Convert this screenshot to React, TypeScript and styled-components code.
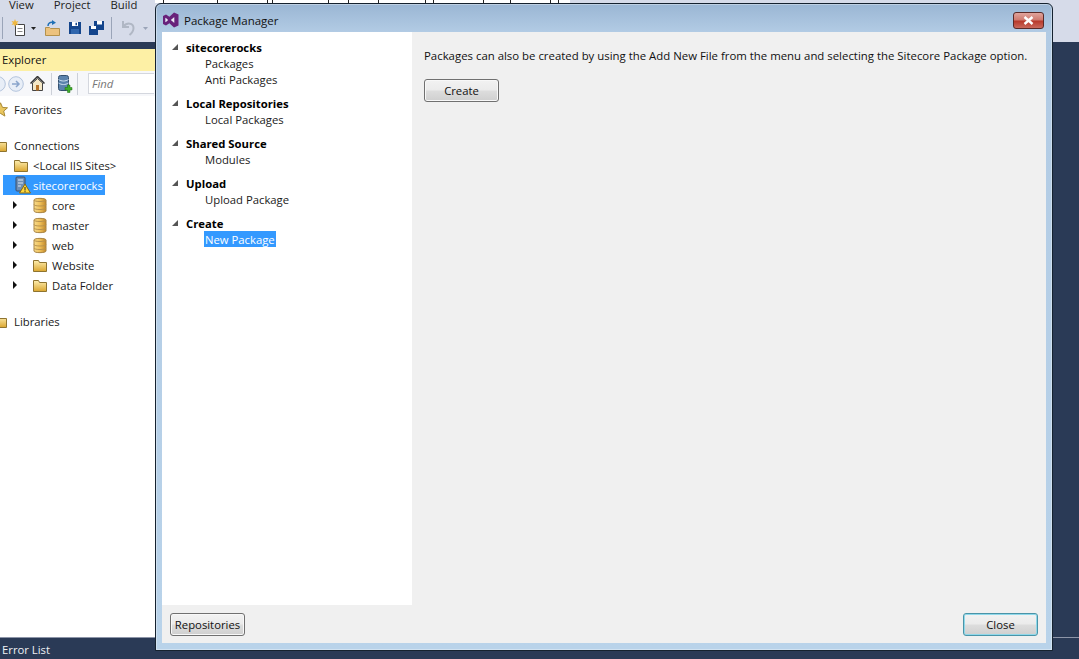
import React from 'react';
import styled, { createGlobalStyle } from 'styled-components';

const GlobalStyle = createGlobalStyle`
  html, body {
    margin: 0;
    padding: 0;
    height: 100%;
    overflow: hidden;
    background: #2a3a56;
  }
  body {
    font-family: "Open Sans", "Noto Sans", sans-serif;
    font-size: 11.3px;
    color: #1a1a1a;
  }
`;

const Shell = styled.div`
  position: relative;
  width: 1079px;
  height: 659px;
  overflow: hidden;
  display: flex;
  flex-direction: column;
`;

const MenuBar = styled.div`
  height: 12px;
  flex: none;
  display: flex;
  background: #d6dbe9;
  overflow: hidden;
  padding-left: 9px;
  gap: 20px;
`;

const MenuItem = styled.span`
  line-height: 9px;
  height: 12px;
  color: #222;
`;

const MainToolbar = styled.div`
  height: 30px;
  flex: none;
  display: flex;
  align-items: center;
  padding: 2px 0 0 2px;
  box-sizing: border-box;
  background: #d6dbe9;
`;

const Tool = styled.span<{ $ml: number }>`
  display: flex;
  flex: none;
  margin-left: ${p => p.$ml}px;
`;

const Separator = styled.div<{ $light?: boolean }>`
  width: 1px;
  height: 22px;
  background: ${p => (p.$light ? '#ccd0d8' : '#9aa4b8')};
`;

const Middle = styled.div`
  flex: 1;
  display: flex;
  padding-top: 7px;
  min-height: 0;
`;

const ExplorerPane = styled.div`
  width: 155px;
  background: #fff;
  display: flex;
  flex-direction: column;
  overflow: hidden;
`;

const PaneTitle = styled.div`
  height: 22px;
  background: #fdf0a5;
  line-height: 22px;
  padding-left: 2px;
  flex: none;
  color: #111;
`;

const PaneToolbar = styled.div`
  height: 25px;
  flex: none;
  display: flex;
  align-items: center;
  background: #f6f7fa;
  box-sizing: border-box;
`;

const FindBox = styled.div`
  width: 66px;
  height: 21px;
  box-sizing: border-box;
  background: #fff;
  border: 1px solid #d4d7de;
  border-right: none;
  font-style: italic;
  color: #777;
  line-height: 19px;
  padding-left: 3px;
`;

const Tree = styled.div`
  display: flex;
  flex-direction: column;
  padding-top: 3px;
`;

const Row = styled.div<{ $indent: number; $gapBefore?: number }>`
  height: 20px;
  display: flex;
  align-items: center;
  padding-left: ${p => p.$indent}px;
  margin-top: ${p => p.$gapBefore ?? 0}px;
`;

const IconSlot = styled.span<{ $width: number }>`
  width: ${p => p.$width}px;
  flex: none;
  display: flex;
  align-items: center;
`;

// left-edge icons are cut by the window edge in the screenshot
const CutIcon = styled.span`
  display: flex;
  margin-left: -7px;
`;

const SelectedRow = styled.div`
  height: 20px;
  display: flex;
  align-items: center;
  padding: 0 2px 0 12px;
  background: #3399ff;
  color: #fff;
`;

const Expander = styled.span`
  width: 0;
  height: 0;
  margin-right: 16px;
  flex: none;
  border-left: 4px solid #111;
  border-top: 4px solid transparent;
  border-bottom: 4px solid transparent;
`;

const BottomBar = styled.div`
  height: 22px;
  box-sizing: border-box;
  flex: none;
  background: #2a3a56;
  border-top: 1px solid #8d95a8;
  color: #eef0f4;
  line-height: 23px;
  padding-left: 2px;
`;

const TopClip = styled.div`
  position: absolute;
  left: 155px;
  top: 0;
  width: 415px;
  height: 3px;
  background: #fff;
  display: flex;
`;

const Dialog = styled.div`
  position: absolute;
  left: 155px;
  top: 3px;
  width: 898px;
  height: 648px;
  box-sizing: border-box;
  border: 1px solid #15222f;
  border-radius: 6px 6px 0 0;
  background: linear-gradient(180deg, #9ab6d4 0, #b2cbe4 28px, #b9d3ea 100%);
  display: flex;
  flex-direction: column;
  padding: 0 6px 7px;
  box-shadow: inset 0 0 0 1px rgba(255, 255, 255, 0.35);
`;

const TitleBar = styled.div`
  height: 28px;
  box-sizing: border-box;
  flex: none;
  display: flex;
  align-items: center;
  gap: 5px;
  padding: 4px 2px 0 0;
`;

const TitleText = styled.span`
  flex: 1;
  font-size: 11.5px;
  color: #111;
`;

const CloseButton = styled.div`
  width: 31px;
  height: 17px;
  box-sizing: border-box;
  border: 1px solid #5a2a28;
  border-radius: 3px;
  background: linear-gradient(180deg, #e0a49c 0, #cf7b70 45%, #b83a2c 55%, #c9695c 100%);
  display: flex;
  align-items: center;
  justify-content: center;
`;

const DialogBody = styled.div`
  flex: 1;
  display: flex;
  flex-direction: column;
  background: #f0f0f0;
  min-height: 0;
`;

const DialogMain = styled.div`
  flex: 1;
  display: flex;
  min-height: 0;
`;

const NavPanel = styled.div`
  width: 250px;
  background: #fff;
  padding: 7px 0 0 10px;
  box-sizing: border-box;
  display: flex;
  flex-direction: column;
  gap: 8px;
`;

const NavGroup = styled.div`
  display: flex;
  flex-direction: column;
`;

const NavHeading = styled.div`
  height: 16px;
  line-height: 17px;
  font-weight: 700;
  color: #000;
  display: flex;
  align-items: center;
  gap: 8px;
`;

const NavArrow = styled.span`
  width: 0;
  height: 0;
  border-bottom: 6px solid #555;
  border-left: 6px solid transparent;
`;

const NavItem = styled.div`
  height: 16px;
  line-height: 17px;
  padding-left: 32px;
`;

const NavLabel = styled.span<{ $selected?: boolean }>`
  display: inline-block;
  padding: 0 1px;
  height: 16px;
  background: ${p => (p.$selected ? '#3399ff' : 'transparent')};
  color: ${p => (p.$selected ? '#fff' : 'inherit')};
`;

const ContentPanel = styled.div`
  flex: 1;
  padding: 16px 12px;
`;

const Message = styled.div`
  font-size: 11.4px;
  line-height: 16px;
  color: #111;
  margin-bottom: 15px;
  white-space: nowrap;
`;

const Button = styled.div<{ $focused?: boolean }>`
  width: 75px;
  height: 23px;
  box-sizing: border-box;
  border: 1px solid ${p => (p.$focused ? '#4a94a8' : '#707070')};
  border-radius: 3px;
  background: linear-gradient(180deg, #f2f2f2 0, #ebebeb 48%, #dddddd 52%, #cfcfcf 100%);
  box-shadow: inset 0 0 0 1px ${p => (p.$focused ? '#8fd8ea' : '#f8f8f8')};
  display: flex;
  align-items: center;
  justify-content: center;
  color: #111;
`;

const Footer = styled.div`
  height: 38px;
  flex: none;
  display: flex;
  align-items: center;
  justify-content: space-between;
  box-sizing: border-box;
  padding: 0 8px;
`;

const Folder = ({ width = 14, height = 13 }: { width?: number; height?: number }) => (
  <svg width={width} height={height} viewBox="0 0 14 13">
    <defs>
      <linearGradient id="fold" x1="0" y1="0" x2="0" y2="1">
        <stop offset="0" stopColor="#fdeeb0" />
        <stop offset="1" stopColor="#dba62f" />
      </linearGradient>
    </defs>
    <path d="M.5 1.500h5l1 2h7v9H.5z" fill="url(#fold)" stroke="#8f7430" />
  </svg>
);

const Database = () => (
  <svg width="14" height="17" viewBox="0 0 14 17">
    <defs>
      <linearGradient id="db" x1="0" y1="0" x2="1" y2="0">
        <stop offset="0" stopColor="#f7dc8e" />
        <stop offset="0.5" stopColor="#efc05a" />
        <stop offset="1" stopColor="#c2892a" />
      </linearGradient>
    </defs>
    <path d="M1 3C1 .8 13 .8 13 3v11c0 2.200-12 2.200-12 0z" fill="url(#db)" stroke="#a98443" />
    <path d="M1 3c0 2 12 2 12 0M1 7.500c0 2 12 2 12 0M1 11c0 2 12 2 12 0" fill="none" stroke="#b8934e" />
  </svg>
);

const ServerWarning = () => (
  <svg width="16" height="18" viewBox="0 0 16 18">
    <rect x="1" y="1" width="9" height="14" rx="1" fill="#6f8fb5" stroke="#3b4e6b" />
    <path d="M3 4h5M3 7h5M3 10h3" stroke="#dfe8f2" />
    <path d="M10 8l5.500 9H4.500z" fill="#ffd83a" stroke="#8a6a10" />
    <path d="M10 11v3.500M10 15.200v1" stroke="#222" />
  </svg>
);

const VsLogo = () => (
  <svg width="17" height="16" viewBox="0 0 17 16">
    <path
      d="M12 .5l4.500 2v11l-4.500 2-4.600-4.300L4 13.500l-3-1.500V4l3-1.500 3.400 2.300zM3.500 5.700v4.600L6 8zM9 8l3.200 2.800V5.200z"
      fill="#68217a"
      fillRule="evenodd"
    />
    <path d="M3.500 5.700v4.600L6 8zM9 8l3.200 2.800V5.200z" fill="#efe6f2" />
  </svg>
);

const NewItem = () => (
  <svg width="16" height="18" viewBox="0 0 16 18">
    <path d="M4.500 5.500h9v11h-9z" fill="#fff" stroke="#444" />
    <path d="M6.500 9.500h5M6.500 12.500h5" stroke="#888" />
    <path d="M4 0l1 2.500L7.500 2 6 4l1.500 2L5 5.500 4 8 3 5.500.5 6 2 4 .5 2 3 2.500z" fill="#f0b840" />
  </svg>
);

const OpenFolder = () => (
  <svg width="15" height="16" viewBox="0 0 15 16">
    <path d="M.5 7.500h4l1 1h9v7H.5z" fill="#ecc27e" stroke="#b3914c" />
    <path d="M3 6c0-3 2.500-4 5-3.500" fill="none" stroke="#1f6fb5" strokeWidth="1.500" />
    <path d="M7 0l4 2.700L7 5z" fill="#1f6fb5" />
  </svg>
);

const Floppy = () => (
  <svg width="12" height="12" viewBox="0 0 12 12">
    <path d="M0 0h12v12H0z" fill="#14458c" />
    <path d="M3 0h6v4H3z" fill="#fff" />
    <path d="M6.500 .8h1.500v2.400H6.500z" fill="#14458c" />
    <path d="M2 7h8v5H2z" fill="#2f66ad" />
  </svg>
);

const FloppyStack = () => (
  <svg width="15" height="14" viewBox="0 0 15 14">
    <path d="M5 0h10v9H5z" fill="#14458c" />
    <path d="M8 0h5v3.500H8z" fill="#fff" />
    <path d="M0 5h9v9H0z" fill="#14458c" />
    <path d="M2 5h5v3H2z" fill="#fff" />
  </svg>
);

const Undo = () => (
  <svg width="14" height="16" viewBox="0 0 14 16">
    <path d="M2 1v6h6" fill="none" stroke="#b0b7c4" strokeWidth="2" />
    <path d="M2.500 6.500C6 2 12.500 3 12.500 8c0 2.500-1.500 5-4 7" fill="none" stroke="#b0b7c4" strokeWidth="2" />
  </svg>
);

const Caret = ({ color = '#222' }: { color?: string }) => (
  <svg width="5" height="3" viewBox="0 0 5 3">
    <path d="M0 0h5L2.500 3z" fill={color} />
  </svg>
);

const NavCircle = ({ faded }: { faded?: boolean }) => (
  <svg width="16" height="16" viewBox="0 0 16 16">
    <circle cx="8" cy="8" r="7.300" fill="#e8eef7" stroke="#b3c4dc" />
    {!faded && <path d="M4 8h6M8 5l3 3-3 3" fill="none" stroke="#8aa5cc" strokeWidth="1.500" />}
  </svg>
);

const Home = () => (
  <svg width="15" height="15" viewBox="0 0 15 15">
    <path d="M.5 7.500l7-7 7 7" fill="none" stroke="#333" strokeWidth="1.500" />
    <path d="M2.500 7V14.500h10V7L7.500 2.500z" fill="#f5e8c6" stroke="#444" />
    <path d="M6 9h3v5.500H6z" fill="#b8742a" />
  </svg>
);

const AddDatabase = () => (
  <svg width="15" height="18" viewBox="0 0 15 18">
    <rect x=".5" y=".5" width="10" height="15" rx="2" fill="#5b83ad" stroke="#34506f" />
    <path d="M.5 4.500c3 2 7 2 10 0M.5 8c3 2 7 2 10 0" fill="none" stroke="#cfe0f0" />
    <path d="M8 9.500h2.500V7h2.500v2.500H15V12h-2v2.500h-2.500V12H8z" transform="translate(-1 3)" fill="#3fae2a" stroke="#1d6e12" strokeWidth="0.500" />
  </svg>
);

const Star = () => (
  <svg width="15" height="15" viewBox="0 0 15 15">
    <path d="M7.500 .8l2 4.600 5 .4-3.800 3.300 1.200 5L7.500 11.400 3.100 14.100l1.200-5L.5 5.800l5-.4z" fill="#e9c65f" stroke="#a98a35" />
  </svg>
);

const CloseGlyph = () => (
  <svg width="11" height="9" viewBox="0 0 11 9">
    <path d="M1.500 1l8 7M9.500 1l-8 7" stroke="#fff" strokeWidth="2.400" />
  </svg>
);

// bottoms of the text lines of the window behind the dialog
const TopTicks = () => (
  <svg width="415" height="3" viewBox="0 0 415 3">
    <path
      d="M8.500 0v3M62.500 0v3M112.500 0v3M117.500 0v3M173.500 0v3M193.500 0v3M223.500 0v3M270.500 0v3M278.500 0v3M328.500 0v3M355.500 0v3M395.500 0v3M403.500 0v3"
      stroke="#222"
    />
  </svg>
);

const groups = [
  { title: 'sitecorerocks', items: ['Packages', 'Anti Packages'] },
  { title: 'Local Repositories', items: ['Local Packages'] },
  { title: 'Shared Source', items: ['Modules'] },
  { title: 'Upload', items: ['Upload Package'] },
  { title: 'Create', items: ['New Package'] },
];

export default function App() {
  return (
    <>
      <GlobalStyle />
      <Shell>
        <MenuBar>
          <MenuItem>View</MenuItem>
          <MenuItem>Project</MenuItem>
          <MenuItem>Build</MenuItem>
        </MenuBar>
        <MainToolbar>
          <Separator />
          <Tool $ml={8}><NewItem /></Tool>
          <Tool $ml={4}><Caret /></Tool>
          <Tool $ml={9}><OpenFolder /></Tool>
          <Tool $ml={9}><Floppy /></Tool>
          <Tool $ml={8}><FloppyStack /></Tool>
          <Tool $ml={7}><Separator /></Tool>
          <Tool $ml={9}><Undo /></Tool>
          <Tool $ml={8}><Caret color="#9aa4b8" /></Tool>
        </MainToolbar>
        <Middle>
          <ExplorerPane>
            <PaneTitle>Explorer</PaneTitle>
            <PaneToolbar>
              <Tool $ml={-10}><NavCircle faded /></Tool>
              <Tool $ml={2}><NavCircle /></Tool>
              <Tool $ml={6}><Home /></Tool>
              <Tool $ml={6}><Separator $light /></Tool>
              <Tool $ml={6}><AddDatabase /></Tool>
              <Tool $ml={4}><Separator $light /></Tool>
              <Tool $ml={10}><FindBox>Find</FindBox></Tool>
            </PaneToolbar>
            <Tree>
              <Row $indent={0}>
                <IconSlot $width={14}><CutIcon><Star /></CutIcon></IconSlot>
                <span>Favorites</span>
              </Row>
              <Row $indent={0} $gapBefore={16}>
                <IconSlot $width={14}><CutIcon><Folder /></CutIcon></IconSlot>
                <span>Connections</span>
              </Row>
              <Row $indent={14}>
                <IconSlot $width={19}><Folder /></IconSlot>
                <span>&lt;Local IIS Sites&gt;</span>
              </Row>
              <Row $indent={3}>
                <SelectedRow>
                  <IconSlot $width={18}><ServerWarning /></IconSlot>
                  <span>sitecorerocks</span>
                </SelectedRow>
              </Row>
              {['core', 'master', 'web'].map(name => (
                <Row key={name} $indent={13}>
                  <Expander />
                  <IconSlot $width={19}><Database /></IconSlot>
                  <span>{name}</span>
                </Row>
              ))}
              {['Website', 'Data Folder'].map(name => (
                <Row key={name} $indent={13}>
                  <Expander />
                  <IconSlot $width={19}><Folder /></IconSlot>
                  <span>{name}</span>
                </Row>
              ))}
              <Row $indent={0} $gapBefore={16}>
                <IconSlot $width={14}><CutIcon><Folder /></CutIcon></IconSlot>
                <span>Libraries</span>
              </Row>
            </Tree>
          </ExplorerPane>
        </Middle>
        <BottomBar>Error List</BottomBar>

        <TopClip>
          <TopTicks />
        </TopClip>
        <Dialog>
          <TitleBar>
            <VsLogo />
            <TitleText>Package Manager</TitleText>
            <CloseButton>
              <CloseGlyph />
            </CloseButton>
          </TitleBar>
          <DialogBody>
            <DialogMain>
              <NavPanel>
                {groups.map(group => (
                  <NavGroup key={group.title}>
                    <NavHeading>
                      <NavArrow />
                      {group.title}
                    </NavHeading>
                    {group.items.map(item => (
                      <NavItem key={item}>
                        <NavLabel $selected={item === 'New Package'}>{item}</NavLabel>
                      </NavItem>
                    ))}
                  </NavGroup>
                ))}
              </NavPanel>
              <ContentPanel>
                <Message>
                  Packages can also be created by using the Add New File from the menu and selecting the Sitecore Package option.
                </Message>
                <Button>Create</Button>
              </ContentPanel>
            </DialogMain>
            <Footer>
              <Button>Repositories</Button>
              <Button $focused>Close</Button>
            </Footer>
          </DialogBody>
        </Dialog>
      </Shell>
    </>
  );
}
